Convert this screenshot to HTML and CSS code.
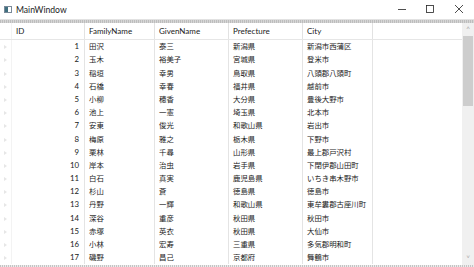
FILE: index.html
```html
<!DOCTYPE html>
<html lang="ja">
<head>
<meta charset="utf-8">
<link rel="stylesheet" href="styles.css">
</head>
<body>
<div class="window">
  <div class="titlebar">
    <svg class="appicon" width="8" height="7" viewBox="0 0 8 7"><rect x="0.5" y="0.5" width="7" height="6" fill="#fff" stroke="#7a8a99"/><rect x="1" y="1" width="3" height="5" fill="#3f6f7f"/></svg>
    <span class="title">MainWindow</span>
    <div class="controls">
      <svg class="ctl" width="28" height="19" viewBox="0 0 28 19"><line x1="10" y1="9.5" x2="18" y2="9.5" stroke="#222" stroke-width="0.8"/></svg>
      <svg class="ctl" width="28" height="19" viewBox="0 0 28 19"><rect x="10.5" y="5.5" width="7" height="7" fill="none" stroke="#222" stroke-width="0.8"/></svg>
      <svg class="ctl" width="30" height="19" viewBox="0 0 30 19"><path d="M11 5 L19 13 M19 5 L11 13" stroke="#222" stroke-width="0.8"/></svg>
    </div>
  </div>
  <div class="band"></div>
  <div class="area">
    <div class="grid">
      <div class="row head">
        <div class="cell rh"></div>
        <div class="cell">ID</div>
        <div class="cell">FamilyName</div>
        <div class="cell">GivenName</div>
        <div class="cell">Prefecture</div>
        <div class="cell">City</div>
        <div class="cell fill"></div>
      </div>
      <div class="body" id="body"></div>
    </div>
    <div class="scrollbar">
      <div class="arrow up">&#x2C4;</div>
      <div class="thumb"></div>
      <div class="track"></div>
      <div class="arrow down">&#x2C5;</div>
    </div>
  </div>
  <div class="band bottom"></div>
</div>
<script src="app.js"></script>
</body>
</html>
```
FILE: app.js
```js
const data = [
  [1,"田沢","泰三","新潟県","新潟市西蒲区"],
  [2,"玉木","裕美子","宮城県","登米市"],
  [3,"稲垣","幸男","鳥取県","八頭郡八頭町"],
  [4,"石橋","幸春","福井県","越前市"],
  [5,"小柳","穂香","大分県","豊後大野市"],
  [6,"池上","一憲","埼玉県","北本市"],
  [7,"安東","俊光","和歌山県","岩出市"],
  [8,"梅原","雅之","栃木県","下野市"],
  [9,"栗林","千尋","山形県","最上郡戸沢村"],
  [10,"岸本","治虫","岩手県","下閉伊郡山田町"],
  [11,"白石","真実","鹿児島県","いちき串木野市"],
  [12,"杉山","蒼","徳島県","徳島市"],
  [13,"丹野","一輝","和歌山県","東牟婁郡古座川町"],
  [14,"深谷","重彦","秋田県","秋田市"],
  [15,"赤塚","英衣","秋田県","大仙市"],
  [16,"小林","宏寿","三重県","多気郡明和町"],
  [17,"磯野","昌己","京都府","舞鶴市"]
];
const body = document.getElementById("body");
for (const r of data) {
  const row = document.createElement("div");
  row.className = "row";
  row.innerHTML =
    '<div class="cell rh"><span class="tri"></span></div>' +
    '<div class="cell num">' + r[0] + '</div>' +
    '<div class="cell">' + r[1] + '</div>' +
    '<div class="cell">' + r[2] + '</div>' +
    '<div class="cell">' + r[3] + '</div>' +
    '<div class="cell">' + r[4] + '</div>' +
    '<div class="cell fill"></div>';
  body.appendChild(row);
}
```
FILE: styles.css
```css
html, body { margin: 0; padding: 0; }
body {
  width: 474px;
  height: 267px;
  overflow: hidden;
  background: #fff;
  font-family: Lato, "Noto Sans CJK JP", sans-serif;
  color: #1a1a1a;
}
.window {
  width: 474px;
  height: 267px;
  display: flex;
  flex-direction: column;
}
.titlebar {
  height: 19px;
  display: flex;
  align-items: center;
  background: #fff;
}
.appicon { margin-left: 4px; margin-right: 4px; }
.title { font-size: 8.6px; color: #222; }
.controls { margin-left: auto; display: flex; }
.ctl { display: block; }
.band {
  height: 3px;
  background: repeating-linear-gradient(90deg, #bdbdbd 0 1px, #d6d6d6 1px 2px);
  border-top: 1px solid #e2e2e2;
}
.band.bottom { height: 2px; border-top: none; background: repeating-linear-gradient(90deg, #c4c4c4 0 1px, #ececec 1px 2px); }
.area {
  flex: 1;
  display: flex;
  min-height: 0;
  overflow: hidden;
}
.grid { flex: 1; display: flex; flex-direction: column; }
.row {
  display: grid;
  grid-template-columns: 12px 73px 70px 74px 74px 70px 1fr;
  height: 13.2px;
  font-size: 7.4px;
  line-height: 13.2px;
}
.row.head {
  height: 16.2px;
  line-height: 16.2px;
  border-bottom: 1px solid #e6e6e6;
  font-size: 8px;
}
.cell {
  padding-left: 4px;
  border-right: 1px solid #e4e4e4;
  white-space: nowrap;
  overflow: hidden;
}
.head .cell { border-right-color: #e2e2e2; }
.cell.fill { border-right: none; }
.cell.rh { padding: 0; position: relative; border-right: 1px solid #f3f3f3; }
.cell.num { text-align: right; padding-right: 5px; padding-left: 0; font-size: 7.8px; }
.tri {
  position: absolute;
  left: 4px;
  top: 5px;
  width: 0; height: 0;
  border-left: 3px solid #e6e6e6;
  border-top: 2px solid transparent;
  border-bottom: 2px solid transparent;
}
.scrollbar {
  width: 12px;
  background: #f0f0f0;
  display: flex;
  flex-direction: column;
  align-items: stretch;
}
.arrow {
  height: 13px;
  font-size: 8px;
  line-height: 13px;
  text-align: center;
  color: #a8a8a8;
}
.thumb {
  height: 70px;
  margin: 0 1px;
  background: #cdcdcd;
}
.track { flex: 1; }
```
